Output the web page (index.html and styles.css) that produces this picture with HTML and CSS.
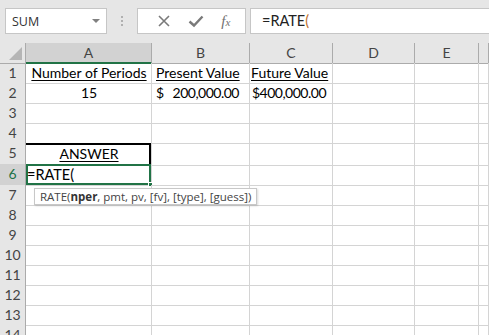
FILE: index.html
```html
<!DOCTYPE html>
<html>
<head>
    <meta charset="UTF-8">
    <title>RATE</title>
    <link rel="stylesheet" href="styles.css">
</head>
<body>
<header class="toolbar">
    <div class="namebox">
        <span>SUM</span>
        <i class="caret"></i>
    </div>
    <div class="grip"><b></b><b></b><b></b></div>
    <div class="fbuttons">
        <svg width="14" height="14" viewBox="0 0 14 14"><path d="M2 2 L12 12 M12 2 L2 12" stroke="#7a7a7a" stroke-width="1.6" fill="none"/></svg>
        <svg width="16" height="14" viewBox="0 0 16 14"><path d="M1.5 7.5 L6 11.5 L14.5 2.5" stroke="#7a7a7a" stroke-width="2.4" fill="none"/></svg>
        <span class="fx"><i>f</i><i class="sub">x</i></span>
    </div>
    <div class="formula"><span>=RATE</span><span class="paren">(</span></div>
</header>
<main class="sheet">
    <div class="row head">
        <div class="corner"><i></i></div>
        <div class="col sel">A</div>
        <div class="col">B</div>
        <div class="col">C</div>
        <div class="col">D</div>
        <div class="col">E</div>
        <div class="col"></div>
    </div>
    <div class="row">
        <div class="num">1</div>
        <div class="cell center"><u>Number of Periods</u></div>
        <div class="cell"><u>Present Value</u></div>
        <div class="cell tight"><u>Future Value</u></div>
        <div class="cell"></div><div class="cell"></div><div class="cell"></div>
    </div>
    <div class="row">
        <div class="num">2</div>
        <div class="cell center">15</div>
        <div class="cell money"><span>$</span><span>200,000.00</span></div>
        <div class="cell money last"><span>$400,000.00</span></div>
        <div class="cell"></div><div class="cell"></div><div class="cell"></div>
    </div>
    <div class="row">
        <div class="num">3</div>
        <div class="cell"></div><div class="cell"></div><div class="cell"></div>
        <div class="cell"></div><div class="cell"></div><div class="cell"></div>
    </div>
    <div class="row">
        <div class="num">4</div>
        <div class="cell"></div><div class="cell"></div><div class="cell"></div>
        <div class="cell"></div><div class="cell"></div><div class="cell"></div>
    </div>
    <div class="row tall">
        <div class="num">5</div>
        <div class="cell center answer"><u>ANSWER</u></div>
        <div class="cell"></div><div class="cell"></div>
        <div class="cell"></div><div class="cell"></div><div class="cell"></div>
    </div>
    <div class="row tall">
        <div class="num active">6</div>
        <div class="cell editing">=RATE(<i class="handle"></i></div>
        <div class="cell"></div><div class="cell"></div>
        <div class="cell"></div><div class="cell"></div><div class="cell"></div>
    </div>
    <div class="row">
        <div class="num">7</div>
        <div class="cell"></div><div class="cell"></div><div class="cell"></div>
        <div class="cell"></div><div class="cell"></div><div class="cell"></div>
    </div>
    <div class="row">
        <div class="num">8</div>
        <div class="cell"></div><div class="cell"></div><div class="cell"></div>
        <div class="cell"></div><div class="cell"></div><div class="cell"></div>
    </div>
    <div class="row">
        <div class="num">9</div>
        <div class="cell"></div><div class="cell"></div><div class="cell"></div>
        <div class="cell"></div><div class="cell"></div><div class="cell"></div>
    </div>
    <div class="row">
        <div class="num">10</div>
        <div class="cell"></div><div class="cell"></div><div class="cell"></div>
        <div class="cell"></div><div class="cell"></div><div class="cell"></div>
    </div>
    <div class="row">
        <div class="num">11</div>
        <div class="cell"></div><div class="cell"></div><div class="cell"></div>
        <div class="cell"></div><div class="cell"></div><div class="cell"></div>
    </div>
    <div class="row">
        <div class="num">12</div>
        <div class="cell"></div><div class="cell"></div><div class="cell"></div>
        <div class="cell"></div><div class="cell"></div><div class="cell"></div>
    </div>
    <div class="row">
        <div class="num">13</div>
        <div class="cell"></div><div class="cell"></div><div class="cell"></div>
        <div class="cell"></div><div class="cell"></div><div class="cell"></div>
    </div>
    <div class="row">
        <div class="num">14</div>
        <div class="cell"></div><div class="cell"></div><div class="cell"></div>
        <div class="cell"></div><div class="cell"></div><div class="cell"></div>
    </div>
    <div class="tip">RATE(<b>nper</b>, pmt, pv, [fv], [type], [guess])</div>
</main>
</body>
</html>
```

FILE: styles.css
```css
* {
    margin: 0;
    padding: 0;
    box-sizing: border-box;
}

body {
    background: #FFFFFF;
    width: 489px;
    height: 335px;
    overflow: hidden;
    font-family: Lato, "Open Sans", sans-serif;
    color: #000;
}

/* formula bar */
.toolbar {
    height: 43px;
    background: #e6e6e6;
    display: flex;
    align-items: center;
    padding: 0 0 1px 5px;
}
.namebox {
    width: 102px;
    height: 26px;
    background: #fff;
    border: 1px solid #c6c6c6;
    display: flex;
    align-items: center;
    justify-content: space-between;
    padding: 0 6px 0 6px;
    font-family: "Open Sans", sans-serif;
    font-size: 12.5px;
    color: #333;
}
.caret {
    width: 0;
    height: 0;
    border-left: 4px solid transparent;
    border-right: 4px solid transparent;
    border-top: 4px solid #808080;
}
.grip {
    width: 30px;
    display: flex;
    flex-direction: column;
    align-items: center;
    gap: 2px;
}
.grip > b {
    width: 2px;
    height: 2px;
    background: #b0b0b0;
}
.fbuttons {
    width: 109px;
    height: 26px;
    background: #fff;
    border: 1px solid #c6c6c6;
    display: flex;
    align-items: center;
    justify-content: space-around;
    padding: 0 6px 0 10px;
}
.fx {
    font-family: "Liberation Serif", serif;
    font-size: 15px;
    color: #707070;
    font-style: italic;
}
.fx > .sub {
    font-size: 11px;
}
.formula {
    flex: 1;
    height: 26px;
    margin-left: 4px;
    background: #fff;
    border: 1px solid #c6c6c6;
    border-right: none;
    padding-left: 11px;
    font-size: 14.5px;
    line-height: 24px;
    color: #222;
}
.formula > .paren {
    color: #c0702e;
}

/* grid */
.sheet {
    position: relative;
}
.row {
    display: grid;
    grid-template-columns: 26px 126px 98px 83px 82px 64px 1fr;
    height: 20px;
}
.row.tall {
    height: 21px;
}
.row.head {
    height: 20px;
    background: #e6e6e6;
}
.corner {
    position: relative;
    border-right: 1px solid #ababab;
    border-bottom: 1px solid #ababab;
}
.corner > i {
    position: absolute;
    right: 3px;
    bottom: 3px;
    width: 0;
    height: 0;
    border-left: 13px solid transparent;
    border-bottom: 13px solid #b5b5b5;
}
.col {
    border-right: 1px solid #ababab;
    border-bottom: 1px solid #ababab;
    text-align: center;
    font-size: 14px;
    line-height: 19px;
    color: #444;
}
.col.sel {
    background: #d2d2d2;
    border-bottom: 2px solid #217346;
}
.num {
    background: #e6e6e6;
    border-right: 1px solid #ababab;
    border-bottom: 1px solid #d4d4d4;
    text-align: center;
    font-size: 14px;
    line-height: 20px;
    color: #444;
}
.num.active {
    background: #d2d2d2;
    color: #217346;
}
.cell {
    border-right: 1px solid #d4d4d4;
    border-bottom: 1px solid #d4d4d4;
    font-size: 14px;
    line-height: 20px;
    padding: 0 3px 0 4px;
    white-space: nowrap;
    position: relative;
}
.cell.tight {
    padding-left: 1px;
}
.cell.center {
    text-align: center;
}
.cell.money {
    display: flex;
    justify-content: space-between;
    padding: 0 10px 0 4px;
    letter-spacing: -0.5px;
}
.cell.money.last {
    justify-content: flex-end;
    padding-right: 6px;
}
.cell.answer {
    box-shadow: inset 0 2px 0 #000, inset -2px 0 0 #000;
    line-height: 22px;
}
.cell.editing {
    box-shadow: inset 0 0 0 2px #217346;
    padding-left: 1px;
    font-size: 14.5px;
    line-height: 21px;
}
.handle {
    position: absolute;
    right: -2px;
    bottom: -2px;
    width: 5px;
    height: 5px;
    background: #217346;
    border: 1px solid #fff;
}
u {
    text-underline-offset: 2px;
}

/* argument tooltip */
.tip {
    position: absolute;
    left: 34px;
    top: 145px;
    height: 17px;
    padding: 0 5px;
    background: #fff;
    border: 1px solid #c8c8c8;
    box-shadow: 1px 1px 2px rgba(0, 0, 0, .15);
    font-family: "Open Sans", sans-serif;
    font-size: 11.5px;
    line-height: 15px;
    color: #444;
    white-space: nowrap;
}
.tip > b {
    color: #333;
}
```
